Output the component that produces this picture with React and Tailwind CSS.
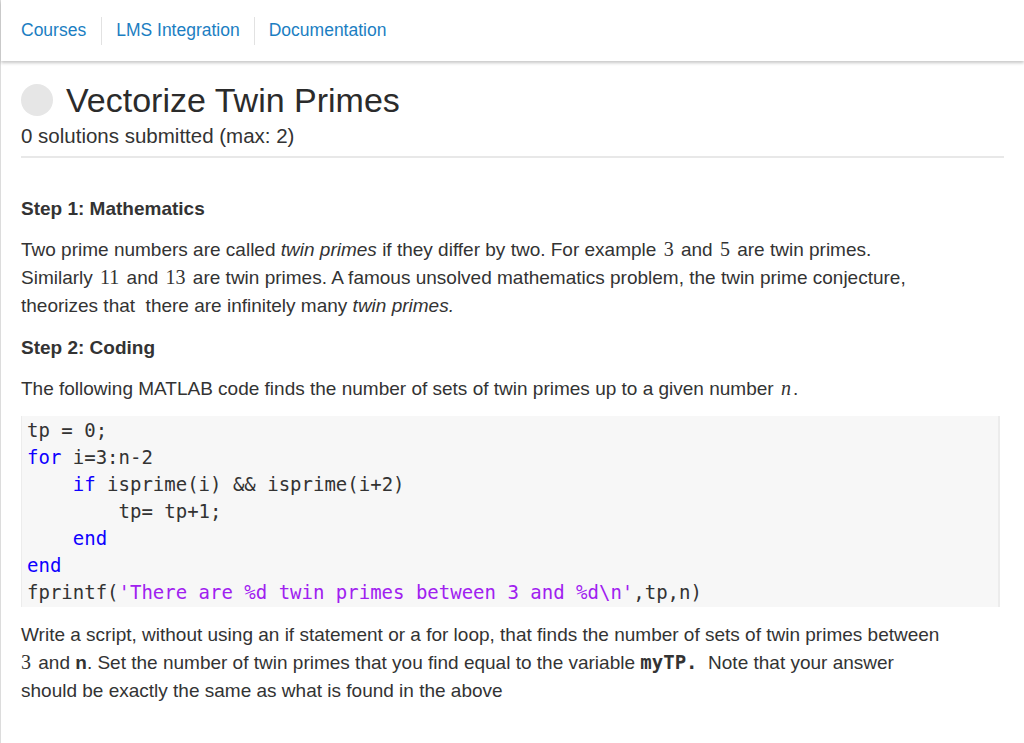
import React from 'react';

const sans = { fontFamily: '"Liberation Sans", Arial, sans-serif' };

const Kw = ({ children }) => <span className="text-[#0e00ff]">{children}</span>;
const Str = ({ children }) => <span className="text-[#a020f0]">{children}</span>;
const M = ({ children }) => (
  <span className="font-['Liberation_Serif',serif] text-[20px] leading-none mx-[2px]">{children}</span>
);

const App = () => {
  return (
    <div className="min-h-[743px] bg-white text-[#333] border-l border-[#dcdcdc]" style={sans}>
      {/* Top nav */}
      <nav className="h-[61px] flex items-center pl-[20px] shadow-[0_2px_3px_rgba(0,0,0,0.22)] relative">
        <a className="text-[17.5px] text-[#1b7ec2] pr-[15px]">Courses</a>
        <span className="w-px h-[28px] bg-[#e2e2e2]" />
        <a className="text-[17.5px] text-[#1b7ec2] px-[14px]">LMS Integration</a>
        <span className="w-px h-[28px] bg-[#e2e2e2]" />
        <a className="text-[17.5px] text-[#1b7ec2] px-[14px]">Documentation</a>
      </nav>

      <div className="pl-[20px] pr-[20px]">
        {/* Header */}
        <div className="pt-[19px] pb-[7px] border-b-2 border-[#e8e8e8]">
          <div className="flex items-center gap-[13px]">
            <span className="w-[32px] h-[32px] rounded-full bg-[#e6e6e6]" />
            <h1 className="text-[34px] leading-[40px] text-[#2b2b2b]">Vectorize Twin Primes</h1>
          </div>
          <div className="text-[20.5px] leading-[26px] text-[#333] mt-[3px]">0 solutions submitted (max: 2)</div>
        </div>

        {/* Body */}
        <div className="pt-[37px] text-[19px] leading-[28px]">
          <h3 className="font-bold text-[19px] mb-[13px]">Step 1: Mathematics</h3>
          <p className="mb-[14px]">
            Two prime numbers are called <i>twin primes</i> if they differ by two. For example <M>3</M> and <M>5</M> are twin primes.
            <br />
            Similarly <M>11</M> and <M>13</M> are twin primes. A famous unsolved mathematics problem, the twin prime conjecture,
            <br />
            theorizes that&nbsp; there are infinitely many <i>twin primes.</i>
          </p>
          <h3 className="font-bold text-[19px] mb-[13px]">Step 2: Coding</h3>
          <p className="mb-[13px]">
            The following MATLAB code finds the number of sets of twin primes up to a given number <M><i>n</i></M>.
          </p>

          <pre className="bg-[#f7f7f7] border-l border-r-2 border-[#ececec] mr-[4px] pl-[5px] pt-[1px] pb-[1px] text-[19px] leading-[27px] text-[#333] font-['DejaVu_Sans_Mono',monospace]">
{`tp = 0;
`}<Kw>for</Kw>{` i=3:n-2
    `}<Kw>if</Kw>{` isprime(i) && isprime(i+2)
        tp= tp+1;
    `}<Kw>end</Kw>{`
`}<Kw>end</Kw>{`
fprintf(`}<Str>'There are %d twin primes between 3 and %d\n'</Str>{`,tp,n)`}
          </pre>

          <p className="mt-[14px]">
            Write a script, without using an if statement or a for loop, that finds the number of sets of twin primes between
            <br />
            <span className="font-['Liberation_Serif',serif] text-[20px] leading-none mr-[2px]">3</span> and <b>n</b>. Set the number of twin primes that you find equal to the variable{' '}
            <b className="font-['DejaVu_Sans_Mono',monospace] text-[19px] leading-none">myTP.</b>&nbsp; Note that your answer
            <br />
            should be exactly the same as what is found in the above
          </p>
        </div>
      </div>
    </div>
  );
};

export default App;
